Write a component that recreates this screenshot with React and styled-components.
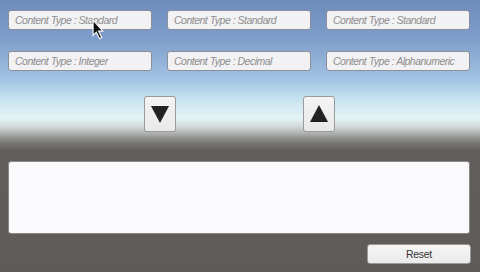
import React from "react";
import styled, { createGlobalStyle } from "styled-components";

const GlobalStyle = createGlobalStyle`
  html, body {
    margin: 0;
    padding: 0;
    background: #5f5b58;
  }
  * {
    box-sizing: border-box;
  }
`;

const Screen = styled.div`
  position: relative;
  width: 480px;
  height: 272px;
  overflow: hidden;
  display: flex;
  flex-direction: column;
  padding: 10px 10px 0 8px;
  font-family: "Liberation Sans", Arial, sans-serif;
  background: linear-gradient(
    to bottom,
    #6d8cbc 0px,
    #7f9ecb 40px,
    #a3c4e4 80px,
    #c9e4f1 100px,
    #e4f4f5 118px,
    #d4dcdc 126px,
    #a9adab 134px,
    #7c7b79 142px,
    #625e5b 150px,
    #5f5b58 272px
  );
`;

const FieldGrid = styled.div`
  display: grid;
  grid-template-columns: repeat(3, 144px);
  column-gap: 15px;
  row-gap: 21px;
`;

const Field = styled.div`
  height: 20px;
  display: flex;
  align-items: center;
  padding-left: 6px;
  background: #f2f1f3;
  border: 1px solid #8a8f99;
  border-radius: 3px;
  color: #8e8e8e;
  font-style: italic;
  font-size: 10.5px;
  letter-spacing: -0.5px;
  white-space: nowrap;
  overflow: hidden;
`;

const ArrowRow = styled.div`
  display: flex;
  gap: 127px;
  margin: 25px 0 0 136px;
`;

const ArrowButton = styled.div`
  width: 32px;
  height: 36px;
  display: flex;
  align-items: center;
  justify-content: center;
  background: linear-gradient(to bottom, #f4f4f5, #e9e9ea);
  border: 1px solid #9a9a9a;
  border-radius: 3px;
`;

const TextArea = styled.div`
  margin-top: 29px;
  height: 73px;
  width: 462px;
  background: #faf9fc;
  border: 1px solid #8a8785;
  border-radius: 3px;
`;

const Footer = styled.div`
  display: flex;
  justify-content: flex-end;
  margin-top: 10px;
  margin-right: -1px;
`;

const ResetButton = styled.div`
  width: 104px;
  height: 20px;
  display: flex;
  align-items: center;
  justify-content: center;
  background: linear-gradient(to bottom, #f5f5f5, #eaeaea);
  border: 1px solid #9a9a9a;
  border-radius: 3px;
  color: #333;
  font-size: 10.5px;
  letter-spacing: -0.3px;
`;

const Cursor = styled.svg`
  position: absolute;
  left: 92px;
  top: 19px;
`;

const fields = [
  "Standard",
  "Standard",
  "Standard",
  "Integer",
  "Decimal",
  "Alphanumeric",
];

export default function App() {
  return (
    <>
      <GlobalStyle />
      <Screen>
        <FieldGrid>
          {fields.map((f, i) => (
            <Field key={i}>Content Type : {f}</Field>
          ))}
        </FieldGrid>
        <ArrowRow>
          <ArrowButton>
            <svg width="20" height="20" viewBox="0 0 20 20">
              <polygon points="1,2 19,2 10,19" fill="#222" />
            </svg>
          </ArrowButton>
          <ArrowButton>
            <svg width="20" height="20" viewBox="0 0 20 20">
              <polygon points="1,18 19,18 10,1" fill="#222" />
            </svg>
          </ArrowButton>
        </ArrowRow>
        <TextArea />
        <Footer>
          <ResetButton>Reset</ResetButton>
        </Footer>
        <Cursor width="13" height="22" viewBox="0 0 12 20">
          <polygon
            points="1,1 1,15 4,12 7,18 9,17 6,11 10,11"
            fill="#111"
            stroke="#fff"
            strokeWidth="1"
          />
        </Cursor>
      </Screen>
    </>
  );
}
